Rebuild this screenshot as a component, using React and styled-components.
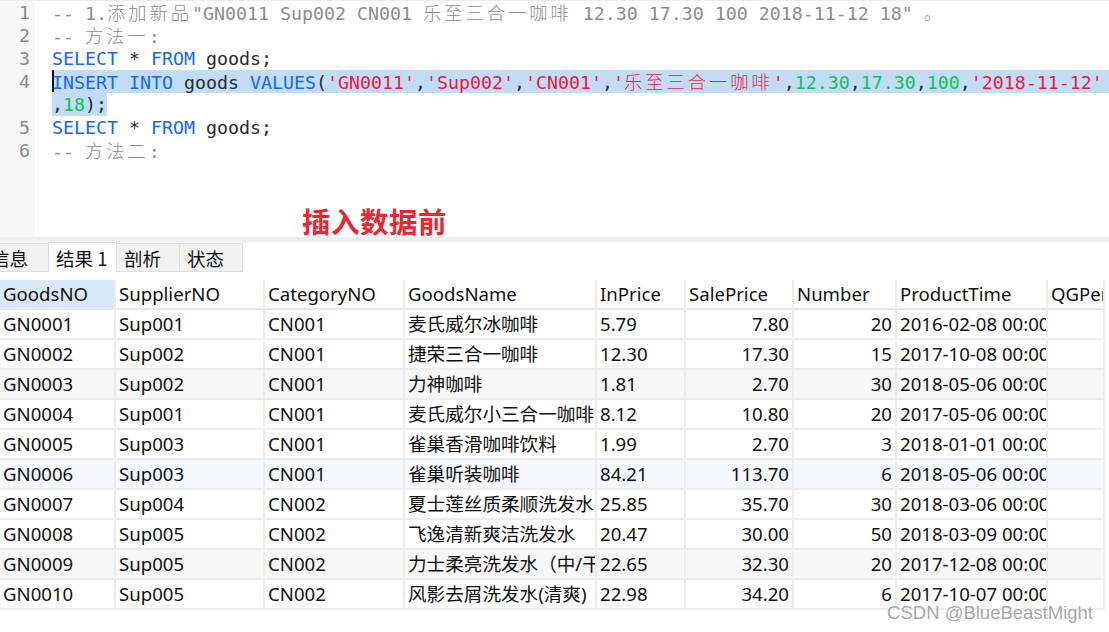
import styled, { createGlobalStyle } from "styled-components";

const GlobalStyle = createGlobalStyle`
  html, body {
    margin: 0;
    padding: 0;
    background: #fff;
    overflow: hidden;
  }
`;

const columns = [
  { name: "GoodsNO", width: 116 },
  { name: "SupplierNO", width: 149 },
  { name: "CategoryNO", width: 140 },
  { name: "GoodsName", width: 192 },
  { name: "InPrice", width: 89 },
  { name: "SalePrice", width: 108, right: true },
  { name: "Number", width: 103, right: true },
  { name: "ProductTime", width: 151 },
  { name: "QGPeriod", width: 57 },
];

const rows = [
  ["GN0001", "Sup001", "CN001", "麦氏威尔冰咖啡", "5.79", "7.80", "20", "2016-02-08 00:00:00", ""],
  ["GN0002", "Sup002", "CN001", "捷荣三合一咖啡", "12.30", "17.30", "15", "2017-10-08 00:00:00", ""],
  ["GN0003", "Sup002", "CN001", "力神咖啡", "1.81", "2.70", "30", "2018-05-06 00:00:00", ""],
  ["GN0004", "Sup001", "CN001", "麦氏威尔小三合一咖啡", "8.12", "10.80", "20", "2017-05-06 00:00:00", ""],
  ["GN0005", "Sup003", "CN001", "雀巢香滑咖啡饮料", "1.99", "2.70", "3", "2018-01-01 00:00:00", ""],
  ["GN0006", "Sup003", "CN001", "雀巢听装咖啡", "84.21", "113.70", "6", "2018-05-06 00:00:00", ""],
  ["GN0007", "Sup004", "CN002", "夏士莲丝质柔顺洗发水", "25.85", "35.70", "30", "2018-03-06 00:00:00", ""],
  ["GN0008", "Sup005", "CN002", "飞逸清新爽洁洗发水", "20.47", "30.00", "50", "2018-03-09 00:00:00", ""],
  ["GN0009", "Sup005", "CN002", "力士柔亮洗发水（中/干性）", "22.65", "32.30", "20", "2017-12-08 00:00:00", ""],
  ["GN0010", "Sup005", "CN002", "风影去屑洗发水(清爽)", "22.98", "34.20", "6", "2017-10-07 00:00:00", ""],
];

const rowBg = { 2: "#f7f7f7", 5: "#f4f8fc", 8: "#f7f7f7" };

const gridCols = columns.map((c) => c.width + "px").join(" ");

const App = () => {
  return (
    <Page>
      <GlobalStyle />
      <Editor>
        <Gutter>
          <LineNo>1</LineNo>
          <LineNo>2</LineNo>
          <LineNo>3</LineNo>
          <LineNo>4</LineNo>
          <LineNo></LineNo>
          <LineNo>5</LineNo>
          <LineNo>6</LineNo>
        </Gutter>
        <Code>
          <CodeLine>
            <Comment>
              -- 1.<Cjk>添加新品</Cjk>"GN0011 Sup002 CN001 <Cjk>乐至三合一咖啡</Cjk> 12.30 17.30 100 2018-11-12 18" <Cjk>。</Cjk>
            </Comment>
          </CodeLine>
          <CodeLine>
            <Comment>
              -- <Cjk>方法一</Cjk>:
            </Comment>
          </CodeLine>
          <CodeLine>
            <Kw>SELECT</Kw> * <Kw>FROM</Kw> goods;
          </CodeLine>
          <CodeLine $selected>
            <Caret />
            <Kw>INSERT</Kw> <Kw>INTO</Kw> goods <Kw>VALUES</Kw>(<Str>'GN0011'</Str>,<Str>'Sup002'</Str>,<Str>'CN001'</Str>,
            <Str>
              '<Cjk>乐至三合一咖啡</Cjk>'
            </Str>
            ,<Num>12.30</Num>,<Num>17.30</Num>,<Num>100</Num>,<Str>'2018-11-12'</Str>
          </CodeLine>
          <CodeLine>
            <Selected>
              ,<Num>18</Num>);
            </Selected>
          </CodeLine>
          <CodeLine>
            <Kw>SELECT</Kw> * <Kw>FROM</Kw> goods;
          </CodeLine>
          <CodeLine>
            <Comment>
              -- <Cjk>方法二</Cjk>:
            </Comment>
          </CodeLine>
        </Code>
      </Editor>
      <Note>插入数据前</Note>
      <Splitter />
      <TabBar>
        <Tab $width={66}>信息</Tab>
        <Tab $width={69} $active>结果 1</Tab>
        <Tab $width={64}>剖析</Tab>
        <Tab $width={64}>状态</Tab>
      </TabBar>
      <Grid>
        <HeadRow>
          {columns.map((c, i) => (
            <HeadCell key={c.name} $first={i === 0}>
              {c.name}
            </HeadCell>
          ))}
        </HeadRow>
        {rows.map((r, ri) => (
          <DataRow key={r[0]} $bg={rowBg[ri]}>
            {r.map((v, ci) => (
              <Cell key={ci} $right={columns[ci].right}>
                {v}
              </Cell>
            ))}
          </DataRow>
        ))}
      </Grid>
      <Watermark>CSDN @BlueBeastMight</Watermark>
    </Page>
  );
};

export default App;

const Page = styled.div`
  position: relative;
  width: 1109px;
  height: 632px;
  overflow: hidden;
  display: flex;
  flex-direction: column;
  background: #fff;
`;

const Editor = styled.div`
  display: flex;
  height: 237px;
  border-top: 1px solid #ececec;
  box-sizing: border-box;
`;

const Gutter = styled.div`
  width: 35px;
  flex-shrink: 0;
  background: #f7f7f7;
`;

const LineNo = styled.div`
  height: 23px;
  line-height: 23px;
  text-align: right;
  padding-right: 5px;
  font-family: "DejaVu Sans Mono", monospace;
  font-size: 18.27px;
  color: #8a8a8a;
`;

const Code = styled.div`
  flex: 1;
  padding-left: 17px;
  overflow: hidden;
  font-family: "DejaVu Sans Mono", "Noto Sans CJK SC", monospace;
  font-size: 18.27px;
  color: #2b2b2b;
`;

const CodeLine = styled.div`
  height: 23px;
  line-height: 23px;
  white-space: pre;
  background: ${({ $selected }) => ($selected ? "#c2dcf6" : "transparent")};
`;

const Selected = styled.span`
  display: inline-block;
  background: #c2dcf6;
`;

const Caret = styled.span`
  display: inline-block;
  width: 0;
  height: 22px;
  border-left: 2px solid #111;
  margin-right: -2px;
  vertical-align: top;
`;

const Kw = styled.span`
  color: #1668f0;
`;

const Str = styled.span`
  color: #f2153f;
`;

const Num = styled.span`
  color: #11c055;
`;

const Comment = styled.span`
  color: #8c8c8c;
`;

const Cjk = styled.span`
  font-family: "Noto Sans CJK SC", sans-serif;
  font-weight: 300;
  letter-spacing: 3px;
`;

const Note = styled.div`
  position: absolute;
  left: 302px;
  top: 205px;
  font-family: "Noto Sans CJK SC", sans-serif;
  font-size: 28.5px;
  line-height: 32px;
  font-weight: 700;
  color: #ea2630;
  letter-spacing: 0.5px;
`;

const Splitter = styled.div`
  height: 5px;
  background: #efefef;
`;

const TabBar = styled.div`
  display: flex;
  align-items: flex-end;
  height: 30px;
  margin-left: -17px;
`;

const Tab = styled.div`
  width: ${({ $width }) => $width}px;
  height: ${({ $active }) => ($active ? 30 : 29)}px;
  box-sizing: border-box;
  padding-left: 7px;
  display: flex;
  align-items: center;
  background: ${({ $active }) => ($active ? "#fff" : "#f2f2f2")};
  border: 1px solid #dedede;
  border-bottom: ${({ $active }) => ($active ? "none" : "1px solid #dedede")};
  margin-right: -1px;
  font-family: "Noto Sans CJK SC", sans-serif;
  font-size: 18.5px;
  color: #111;
`;

const Grid = styled.div`
  margin-top: 8px;
  width: 1105px;
`;

const HeadRow = styled.div`
  display: grid;
  grid-template-columns: ${gridCols};
  height: 28px;
  border-bottom: 2px solid #e8e8e8;
`;

const HeadCell = styled.div`
  padding: 0 3px;
  line-height: 28px;
  border-right: 2px solid #ececec;
  background: ${({ $first }) => ($first ? "#d9e8f6" : "#fff")};
  font-family: "Noto Sans", "Noto Sans CJK SC", sans-serif;
  font-size: 18.6px;
  color: #111;
  white-space: nowrap;
  overflow: hidden;
`;

const DataRow = styled.div`
  display: grid;
  grid-template-columns: ${gridCols};
  height: 30px;
  box-sizing: border-box;
  border-bottom: 2px solid #ececec;
  background: ${({ $bg }) => $bg || "#fff"};
`;

const Cell = styled.div`
  padding: 0 3px;
  line-height: 27px;
  border-right: 2px solid #ececec;
  text-align: ${({ $right }) => ($right ? "right" : "left")};
  font-family: "Noto Sans", "Noto Sans CJK SC", sans-serif;
  font-size: 18.6px;
  color: #111;
  white-space: nowrap;
  overflow: hidden;
`;

const Watermark = styled.div`
  position: absolute;
  right: 16px;
  bottom: 8px;
  font-family: "Liberation Sans", sans-serif;
  font-size: 18.5px;
  color: rgba(150, 150, 150, 0.85);
  text-shadow: 0 0 2px #fff, 0 0 2px #fff;
`;
